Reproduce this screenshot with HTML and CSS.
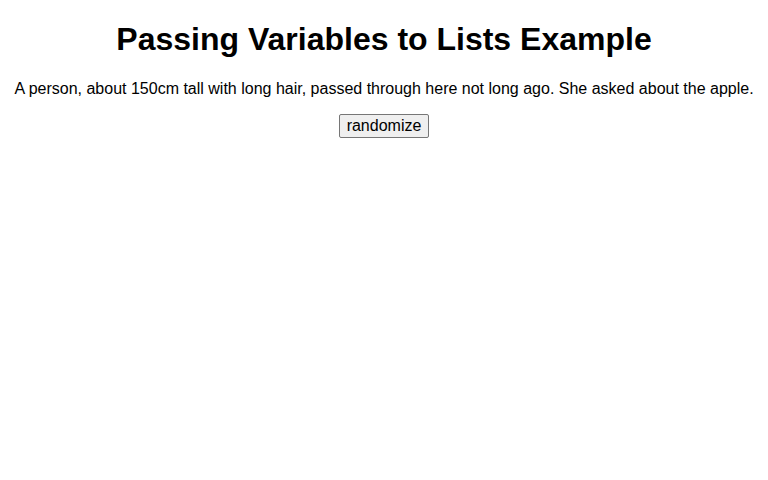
FILE: index.html
```html
<!DOCTYPE html>
<html lang="en">
<head>
    <meta charset="UTF-8">
    <title>Passing Variables to Lists Example</title>
    <link rel="stylesheet" href="styles.css">
</head>
<body>
    <div class="page">
        <h1 class="title">Passing Variables to Lists Example</h1>
        <p class="story">A person, about 150cm tall with long hair, passed through here not long ago. She asked about the apple.</p>
        <button type="button" class="randomize">randomize</button>
    </div>
</body>
</html>
```
FILE: styles.css
```css
body {
    margin: 0;
    font-family: "Liberation Sans", Arial, sans-serif;
    color: #000000;
    background: #ffffff;
}
.page {
    text-align: center;
    padding: 0 8px;
}
.title {
    font-size: 32px;
    font-weight: bold;
    margin: 0;
    padding-top: 21px;
}
.story {
    font-size: 16px;
    margin: 22px 0 16px;
}
.randomize {
    font-family: "Liberation Sans", Arial, sans-serif;
    font-size: 16px;
    color: #000000;
    background: #efefef;
    border: 1px solid #767676;
    border-radius: 2px;
    padding: 2px 7px;
}
```
